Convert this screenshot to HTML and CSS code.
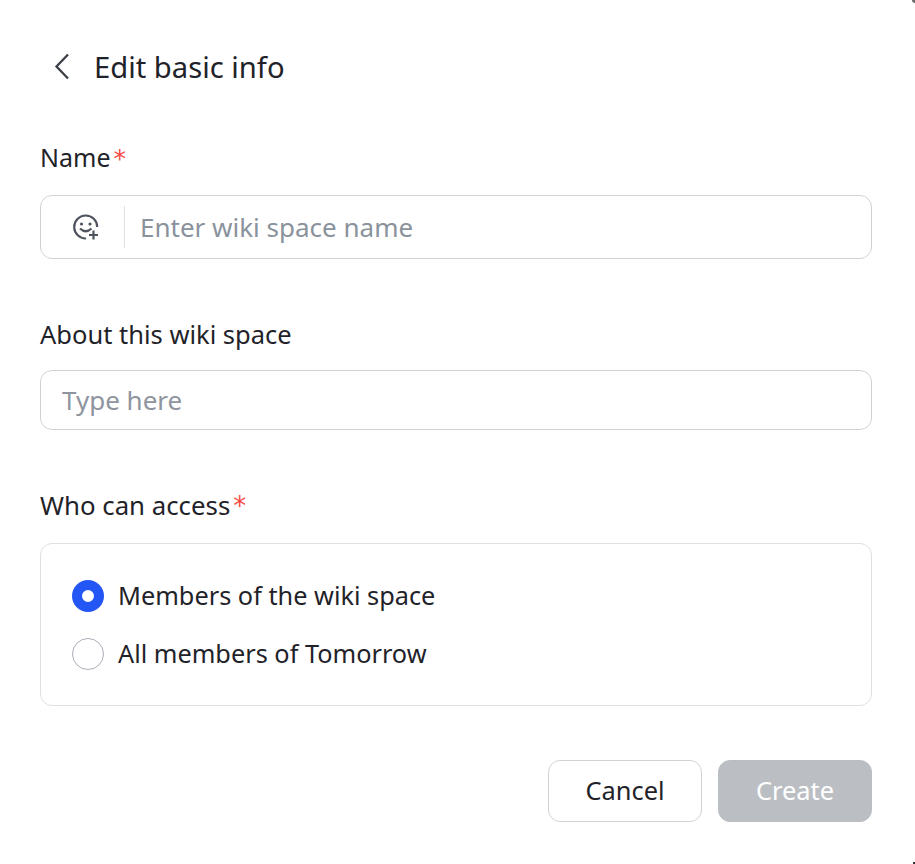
FILE: index.html
```html
<!DOCTYPE html>
<html lang="en">
<head>
    <meta charset="UTF-8">
    <title>Edit basic info</title>
    <link rel="stylesheet" href="styles.css">
</head>
<body>
    <span class="corner corner-top"></span>
    <span class="corner corner-bottom"></span>
    <div class="dialog">
        <div class="header">
            <svg class="back" width="20" height="28" viewBox="0 0 20 28" fill="none">
                <path d="M16 1.5 L4.5 13.5 L16 25.5" stroke="#3b3f46" stroke-width="2.3"/>
            </svg>
            <h2 class="tit">Edit basic info</h2>
        </div>

        <div class="label label-name">Name<span class="req">*</span></div>
        <div class="input-box name-box">
            <div class="emoji">
                <svg width="28" height="28" viewBox="0 0 28 28" fill="none" stroke="#4f555e" stroke-width="2.2">
                    <path d="M25.2 14 A11.5 11.5 0 1 0 14 25.5"/>
                    <circle cx="9.5" cy="11" r="1.6" fill="#4f555e" stroke="none"/>
                    <circle cx="18" cy="11" r="1.6" fill="#4f555e" stroke="none"/>
                    <path d="M8 15.5 Q13.7 21 19.5 15.5"/>
                    <path d="M21.5 17.5 V26.5 M17 22 H26"/>
                </svg>
            </div>
            <span class="placeholder">Enter wiki space name</span>
        </div>

        <div class="label label-about">About this wiki space</div>
        <div class="input-box about-box">
            <span class="hint">Type here</span>
        </div>

        <div class="label label-access">Who can access<span class="req">*</span></div>
        <div class="access-box">
            <div class="radio-row">
                <span class="radio on"></span>
                <span class="radio-text">Members of the wiki space</span>
            </div>
            <div class="radio-row">
                <span class="radio"></span>
                <span class="radio-text">All members of Tomorrow</span>
            </div>
        </div>

        <div class="footer">
            <button class="btn">Cancel</button>
            <button class="btn btn-create">Create</button>
        </div>
    </div>
</body>
</html>
```

FILE: styles.css
```css
html {
    font-size: 16px;
}
body {
    margin: 0;
    background: #fff;
    color: #1f2329;
    font-family: "Noto Sans", sans-serif;
}
.corner {
    position: absolute;
    right: 0;
    background: #6b6b6b;
}
.corner-top {
    top: 0;
    width: 3px;
    height: 3px;
    border-bottom-left-radius: 3px;
}
.corner-bottom {
    bottom: 0;
    width: 2px;
    height: 2px;
    background: #333;
}
.dialog {
    width: 832px;
    padding: 0 43px 0 40px;
}
.header {
    display: flex;
    align-items: center;
    height: 44px;
    padding-top: 45px;
}
.back {
    margin-left: 12px;
    margin-right: 22px;
}
.tit {
    font-size: 29.2px;
    font-weight: 400;
    margin: 0;
}
.label {
    font-size: 25.5px;
    line-height: 34px;
    height: 34px;
}
.label-name {
    margin-top: 51px;
    font-size: 25px;
}
.label-about {
    margin-top: 58px;
}
.label-access {
    margin-top: 58px;
    font-size: 25.8px;
    margin-bottom: 21px;
}
.req {
    color: #f54a45;
    margin-left: 3px;
    font-family: "DejaVu Sans", sans-serif;
    line-height: 0;
}
.input-box {
    border: 1px solid #d0d3d6;
    border-radius: 12px;
    display: flex;
    align-items: center;
    box-sizing: border-box;
    font-size: 26px;
}
.name-box {
    height: 64px;
    margin-top: 21px;
}
.about-box {
    height: 60px;
    margin-top: 19px;
    padding-left: 21px;
}
.emoji {
    width: 84px;
    height: 42px;
    border-right: 1px solid #dee0e3;
    display: flex;
    align-items: center;
    justify-content: center;
    padding-left: 6px;
    box-sizing: border-box;
    margin-right: 15px;
}
.placeholder {
    color: #8a929c;
    margin-top: -1px;
}
.hint {
    color: #8f959e;
    margin-top: -1px;
}
.access-box {
    border: 1px solid #dee0e3;
    border-radius: 12px;
    box-sizing: border-box;
    height: 163px;
    padding: 23px 31px;
    font-size: 25.3px;
}
.radio-row {
    display: flex;
    align-items: center;
    height: 58px;
    gap: 14px;
}
.radio-text {
    margin-bottom: 2px;
}
.radio {
    width: 32px;
    height: 32px;
    border: 1px solid #a9aeb5;
    border-radius: 50%;
    box-sizing: border-box;
    background: #fff;
}
.radio.on {
    border: 10px solid #2456f6;
}
.footer {
    display: flex;
    justify-content: flex-end;
    gap: 16px;
    margin-top: 54px;
}
.btn {
    width: 154px;
    height: 62px;
    border: 1px solid #d0d3d6;
    border-radius: 12px;
    background: #fff;
    color: #1f2329;
    font-family: inherit;
    font-size: 25.4px;
    padding: 0 0 2px;
    cursor: pointer;
}
.btn-create {
    background: #bbbfc4;
    border-color: #bbbfc4;
    color: #fff;
}
```
